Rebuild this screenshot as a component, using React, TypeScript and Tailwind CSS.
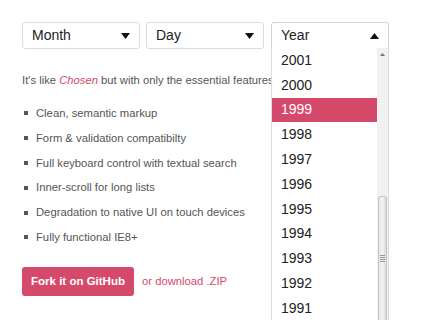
export default function App() {
  const years = ['2001', '2000', '1999', '1998', '1997', '1996', '1995', '1994', '1993', '1992', '1991', '1990']
  const features = [
    'Clean, semantic markup',
    'Form & validation compatibilty',
    'Full keyboard control with textual search',
    'Inner-scroll for long lists',
    'Degradation to native UI on touch devices',
    'Fully functional IE8+',
  ]

  const Down = () => (
    <svg width="9" height="6" viewBox="0 0 9 6"><path d="M0 0 L9 0 L4.5 6 Z" fill="#111" /></svg>
  )
  const Up = () => (
    <svg width="9" height="6" viewBox="0 0 9 6"><path d="M0 6 L9 6 L4.5 0 Z" fill="#111" /></svg>
  )

  return (
    <div className="w-[425px] h-[320px] overflow-hidden bg-white font-['Liberation_Sans',Arial,sans-serif] pl-[22px] pt-[22px]">
      <div className="flex gap-[6px]">
        <div className="w-[118px] h-[27px] border border-[#dcdcdc] rounded-[3px] flex items-center justify-between pl-[9px] pr-[9px] text-[14px] text-[#222]">
          <span>Month</span>
          <Down />
        </div>
        <div className="w-[118px] h-[27px] border border-[#dcdcdc] rounded-[3px] flex items-center justify-between pl-[9px] pr-[9px] text-[14px] text-[#222]">
          <span>Day</span>
          <Down />
        </div>
        <div className="relative ml-[1px]">
          <div className="w-[118px] h-[27px] border border-[#cfd3da] rounded-t-[3px] flex items-center justify-between pl-[9px] pr-[9px] text-[14px] text-[#222]">
            <span>Year</span>
            <Up />
          </div>
          <div className="absolute left-0 top-[26px] w-[118px] h-[300px] border-l border-r border-[#dcdcdc] bg-white flex overflow-hidden">
            <div className="flex-1">
              {years.map((y) => (
                <div
                  key={y}
                  className={
                    y === '1999'
                      ? 'h-[24.8px] flex items-center pl-[9px] text-[14px] bg-[#d54a6b] text-white'
                      : 'h-[24.8px] flex items-center pl-[9px] text-[14px] text-[#222]'
                  }
                >
                  {y}
                </div>
              ))}
            </div>
            <div className="w-[11px] bg-[#f1f1f1] flex flex-col">
              <div className="h-[12px] flex items-center justify-center">
                <svg width="5" height="3" viewBox="0 0 5 3"><path d="M0 3 L2.5 0 L5 3 Z" fill="#777" /></svg>
              </div>
              <div className="h-[136px]" />
              <div className="flex-1 mx-[1px] bg-gradient-to-r from-[#e4e4e4] via-[#f4f4f4] to-[#d8d8d8] border border-[#c6c6c6] rounded-[2px] flex justify-center pt-[58px]">
                <div className="flex flex-col gap-[1px]">
                  <div className="w-[5px] h-[1px] bg-[#999]" />
                  <div className="w-[5px] h-[1px] bg-[#999]" />
                  <div className="w-[5px] h-[1px] bg-[#999]" />
                  <div className="w-[5px] h-[1px] bg-[#999]" />
                </div>
              </div>
            </div>
          </div>
        </div>
      </div>

      <p className="mt-[23px] text-[11.25px] text-[#555] leading-[16px]">
        It's like <em className="text-[#d54a6b]">Chosen</em> but with only the essential features
      </p>

      <ul className="mt-[13px] text-[11.25px] text-[#555]">
        {features.map((f) => (
          <li key={f} className="h-[24.8px] flex items-center">
            <span className="w-[4px] h-[4px] bg-[#555] ml-[2px] mr-[8px]" />
            {f}
          </li>
        ))}
      </ul>

      <div className="mt-[17px] flex items-center">
        <div className="w-[112px] h-[29px] rounded-[3px] bg-[#d54a6b] text-white text-[11.5px] font-bold flex items-center justify-center">
          Fork it on GitHub
        </div>
        <span className="ml-[8px] text-[11.25px] text-[#d54a6b]">or download .ZIP</span>
      </div>
    </div>
  )
}
